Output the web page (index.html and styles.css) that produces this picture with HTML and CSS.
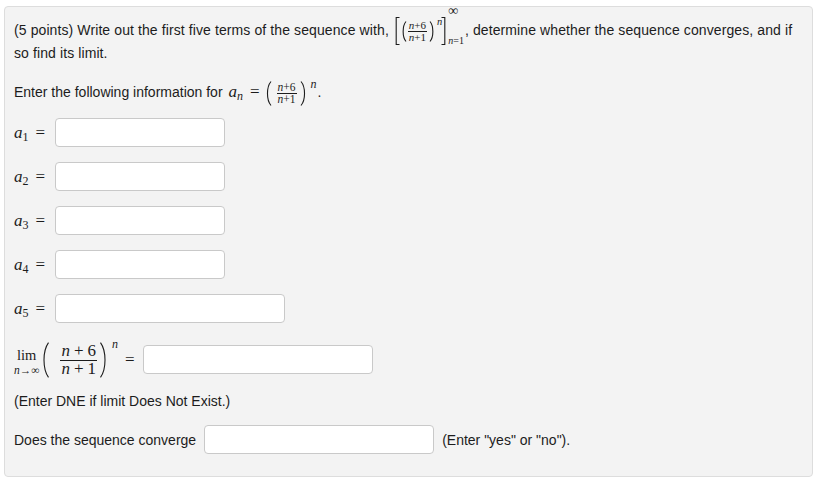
FILE: index.html
```html
<!DOCTYPE html>
<html>
<head>
<meta charset="utf-8">
<link rel="stylesheet" href="styles.css">
</head>
<body>
<div class="panel">
  <p class="q">(5 points) Write out the first five terms of the sequence with, <span class="seq"><svg class="brk" width="5" height="28" viewBox="0 0 5 28"><path d="M4.5 0.5H1.2V27.5H4.5"/></svg><svg class="par-s" width="6" height="21" viewBox="0 0 6 21"><path d="M5 0.5C1.2 5 1.2 16 5 20.5"/></svg><span class="frac f10"><span class="num"><i>n</i>+6</span><span class="den"><i>n</i>+1</span></span><svg class="par-s" width="6" height="21" viewBox="0 0 6 21"><path d="M1 0.5C4.8 5 4.8 16 1 20.5"/></svg><i class="supn">n</i><svg class="brk" width="5" height="28" viewBox="0 0 5 28"><path d="M0.5 0.5H3.8V27.5H0.5"/></svg><span class="lims"><span class="inf">∞</span><span class="low"><i>n</i>=1</span></span></span>, determine whether the sequence converges, and if<br>so find its limit.</p>

  <p class="info">Enter the following information for <span class="mv"><i>a</i><span class="msub"><i>n</i></span></span><span class="meq">=</span><span class="grp"><svg class="par-m" width="7" height="25" viewBox="0 0 7 25"><path d="M6 0.5C1.3 6 1.3 19 6 24.5"/></svg><span class="frac f11"><span class="num"><i>n</i>+6</span><span class="den"><i>n</i>+1</span></span><svg class="par-m" width="7" height="25" viewBox="0 0 7 25"><path d="M1 0.5C5.7 6 5.7 19 1 24.5"/></svg><i class="supn2">n</i></span>.</p>

  <div class="row first">
    <span class="lbl"><i>a</i><span class="msub">1</span><span class="leq">=</span></span>
    <span class="box"></span>
  </div>
  <div class="row">
    <span class="lbl"><i>a</i><span class="msub">2</span><span class="leq">=</span></span>
    <span class="box"></span>
  </div>
  <div class="row">
    <span class="lbl"><i>a</i><span class="msub">3</span><span class="leq">=</span></span>
    <span class="box"></span>
  </div>
  <div class="row">
    <span class="lbl"><i>a</i><span class="msub">4</span><span class="leq">=</span></span>
    <span class="box"></span>
  </div>
  <div class="row">
    <span class="lbl"><i>a</i><span class="msub">5</span><span class="leq">=</span></span>
    <span class="box wide"></span>
  </div>

  <div class="row limrow">
    <span class="limexpr">
      <span class="lim"><span class="limop">lim</span><span class="limsub"><i>n</i>→∞</span></span>
      <svg class="par-l" width="9" height="36" viewBox="0 0 9 36"><path d="M7.5 0.6C1.5 9 1.5 27 7.5 35.4"/></svg>
      <span class="frac f17"><span class="num"><i>n</i><span class="pl">+</span>6</span><span class="den"><i>n</i><span class="pl">+</span>1</span></span>
      <svg class="par-l" width="9" height="36" viewBox="0 0 9 36"><path d="M1.5 0.6C7.5 9 7.5 27 1.5 35.4"/></svg>
      <i class="supn3">n</i>
      <span class="limeq">=</span>
    </span>
    <span class="box wide"></span>
  </div>

  <p class="dne">(Enter DNE if limit Does Not Exist.)</p>

  <div class="row conv">
    <span>Does the sequence converge</span>
    <span class="box wide gapl"></span>
    <span class="gapl">(Enter "yes" or "no").</span>
  </div>
</div>
</body>
</html>
```

FILE: styles.css
```css
body {
  margin: 0;
  font-family: "Liberation Sans", Arial, sans-serif;
  font-size: 14px;
  color: #1c1c1c;
}

.panel {
  margin: 6px 0 0 4px;
  width: 809px;
  height: 471px;
  box-sizing: border-box;
  border: 1px solid #dddddd;
  border-radius: 4px;
  background: #f3f3f3;
  padding: 12px 9px 0 9px;
}

.q {
  margin: 0;
  line-height: 23px;
  white-space: nowrap;
  letter-spacing: 0.1px;
}

i {
  font-family: "Liberation Serif", "Times New Roman", serif;
  font-style: italic;
}

svg path {
  fill: none;
  stroke: #1c1c1c;
  stroke-width: 1.1;
}

/* sequence notation in first line */
.seq {
  display: inline-flex;
  align-items: center;
  vertical-align: middle;
  height: 28px;
  margin: -6px 1px -6px 2px;
  font-family: "Liberation Serif", "Times New Roman", serif;
  letter-spacing: 0;
}

.par-s {
  margin: 0 0 0 1px;
}

.frac {
  display: inline-flex;
  flex-direction: column;
  align-items: center;
  font-family: "Liberation Serif", "Times New Roman", serif;
}

.frac .num {
  border-bottom: 1px solid #1c1c1c;
  padding: 0 1px;
  text-align: center;
  white-space: nowrap;
}

.frac .den {
  padding: 0 1px;
  text-align: center;
  white-space: nowrap;
}

.f10 {
  font-size: 11px;
  line-height: 10px;
  margin: 0 1px;
}

.f10 .num { padding-bottom: 1px; }

.supn {
  font-size: 10.5px;
  line-height: 10px;
  align-self: flex-start;
  margin: 0 -1px 0 2px;
}

.lims {
  align-self: stretch;
  display: flex;
  flex-direction: column;
  justify-content: space-between;
  margin: -11px 0 -1px 2px;
  font-size: 10px;
  line-height: 10px;
}

.inf {
  font-size: 14px;
  line-height: 10px;
}

.low {
  white-space: nowrap;
}

/* second line */
.info {
  margin: 16px 0 0;
  line-height: 21px;
}

.mv {
  font-size: 17px;
  margin-left: 2px;
}

.msub {
  font-family: "Liberation Serif", "Times New Roman", serif;
  font-size: 12px;
  vertical-align: -3px;
  line-height: 0;
}

.meq {
  font-family: "Liberation Serif", "Times New Roman", serif;
  font-size: 17px;
  margin: 0 5px 0 7px;
}

.grp {
  display: inline-flex;
  align-items: center;
  vertical-align: middle;
  height: 25px;
  margin: -3px 1px -3px 0;
}

.f11 {
  font-size: 11.5px;
  line-height: 10.5px;
  margin: 0 3px 0 5px;
}

.f11 .num { padding-bottom: 1px; }

.supn2 {
  font-size: 12px;
  line-height: 12px;
  align-self: flex-start;
  margin: -3px 0 0 4px;
}

/* rows */
.row {
  display: flex;
  align-items: center;
  height: 29px;
  margin-top: 15px;
}

.row.first {
  margin-top: 15px;
}

.lbl {
  width: 41px;
  flex: none;
  font-family: "Liberation Serif", "Times New Roman", serif;
  font-size: 17px;
  white-space: nowrap;
}

.lbl i {
  font-size: 17px;
}

.leq {
  margin-left: 7px;
}

.box {
  box-sizing: border-box;
  display: block;
  flex: none;
  width: 170px;
  height: 29px;
  background: #ffffff;
  border: 1px solid #c9c9c9;
  border-radius: 4px;
}

.box.wide {
  width: 230px;
}

/* limit row */
.row.limrow {
  margin-top: 22px;
}

.limexpr {
  display: flex;
  align-items: center;
  height: 37px;
  font-family: "Liberation Serif", "Times New Roman", serif;
  margin-right: 8px;
}

.lim {
  display: flex;
  flex-direction: column;
  align-items: center;
  margin-top: 5px;
}

.limop {
  font-size: 14.5px;
  line-height: 13px;
}

.limsub {
  font-size: 11.5px;
  line-height: 11px;
  margin-top: 3px;
  white-space: nowrap;
}

.par-l {
  margin: 0 0 0 2px;
}

.f17 {
  font-size: 17px;
  line-height: 16px;
  margin: 0 0 0 10px;
}

.f17 .num { padding-bottom: 1px; }

.pl {
  font-family: "Liberation Serif", "Times New Roman", serif;
  margin: 0 4px;
}

.supn3 {
  font-size: 12px;
  line-height: 12px;
  align-self: flex-start;
  margin: -3px 0 0 4px;
}

.limeq {
  font-size: 17px;
  margin-left: 7px;
}

.dne {
  margin: 17px 0 0;
  line-height: 21px;
}

.row.conv {
  margin-top: 13px;
}

.gapl {
  margin-left: 8px;
}
```
